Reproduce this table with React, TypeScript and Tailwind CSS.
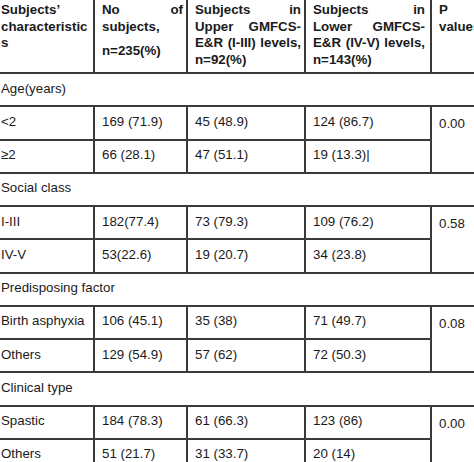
import React from "react";

type Section = {
  title: string;
  p: string;
  rows: string[][];
};

const sections: Section[] = [
  {
    title: "Age(years)",
    p: "0.00",
    rows: [
      ["<2", "169 (71.9)", "45 (48.9)", "124 (86.7)"],
      ["≥2", "66 (28.1)", "47 (51.1)", "19 (13.3)|"],
    ],
  },
  {
    title: "Social class",
    p: "0.58",
    rows: [
      ["I-III", "182(77.4)", "73 (79.3)", "109 (76.2)"],
      ["IV-V", "53(22.6)", "19 (20.7)", "34 (23.8)"],
    ],
  },
  {
    title: "Predisposing factor",
    p: "0.08",
    rows: [
      ["Birth asphyxia", "106 (45.1)", "35 (38)", "71 (49.7)"],
      ["Others", "129 (54.9)", "57 (62)", "72 (50.3)"],
    ],
  },
  {
    title: "Clinical type",
    p: "0.00",
    rows: [
      ["Spastic", "184 (78.3)", "61 (66.3)", "123 (86)"],
      ["Others", "51 (21.7)", "31 (33.7)", "20 (14)"],
    ],
  },
];

const line = "border-[#3a3a3a]";

export default function App() {
  return (
    <div className="w-[474px] h-[462px] overflow-hidden bg-white text-[#1a1a1a] font-['Liberation_Sans',Arial,sans-serif] text-[13.3px]">
      <table className="table-fixed border-collapse w-[487px]">
        <colgroup>
          <col className="w-[94px]" />
          <col className="w-[93px]" />
          <col className="w-[118px]" />
          <col className="w-[126px]" />
          <col className="w-[56px]" />
        </colgroup>
        <thead>
          <tr className="h-[73px] font-bold leading-[16.5px] align-top">
            <th className={`border-b-2 border-r-2 ${line} pl-px pr-[5px] pt-[2px] text-justify font-bold [overflow-wrap:anywhere]`}>
              Subjects’ characteristics
            </th>
            <th className={`border-b-2 border-r-2 ${line} pl-[7px] pr-[3px] pt-[2px] text-justify font-bold`}>
              <p>No of subjects,</p>
              <p className="mt-[8px] text-left">n=235(%)</p>
            </th>
            <th className={`border-b-2 border-r-2 ${line} pl-[7px] pr-[3px] pt-[2px] text-justify font-bold`}>
              Subjects in Upper GMFCS-E&amp;R (I-III) levels, n=92(%)
            </th>
            <th className={`border-b-2 border-r-2 ${line} pl-[7px] pr-[5px] pt-[2px] text-justify font-bold`}>
              Subjects in Lower GMFCS-E&amp;R (IV-V) levels, n=143(%)
            </th>
            <th className={`border-b-2 ${line} pl-[7px] pr-[2px] pt-[2px] text-left font-bold`}>
              P values
            </th>
          </tr>
        </thead>
        <tbody>
          {sections.map((s) => (
            <React.Fragment key={s.title}>
              <tr className="h-[33.25px]">
                <td colSpan={5} className={`border-y-2 ${line} pl-px pb-[2px] align-middle`}>
                  {s.title}
                </td>
              </tr>
              {s.rows.map((r, i) => (
                <tr key={i} className="h-[33.25px]">
                  <td className={`border-y-2 border-r-2 ${line} pl-px pb-[2px] align-middle whitespace-nowrap`}>
                    {r[0]}
                  </td>
                  <td className={`border-2 ${line} pl-[7px] pb-[2px] align-middle`}>{r[1]}</td>
                  <td className={`border-2 ${line} pl-[7px] pb-[2px] align-middle`}>{r[2]}</td>
                  <td className={`border-2 ${line} pl-[7px] pb-[2px] align-middle`}>{r[3]}</td>
                  {i === 0 && (
                    <td rowSpan={2} className={`border-y-2 border-l-2 ${line} pl-[7px] pt-[7px] align-top`}>
                      {s.p}
                    </td>
                  )}
                </tr>
              ))}
            </React.Fragment>
          ))}
        </tbody>
      </table>
    </div>
  );
}
